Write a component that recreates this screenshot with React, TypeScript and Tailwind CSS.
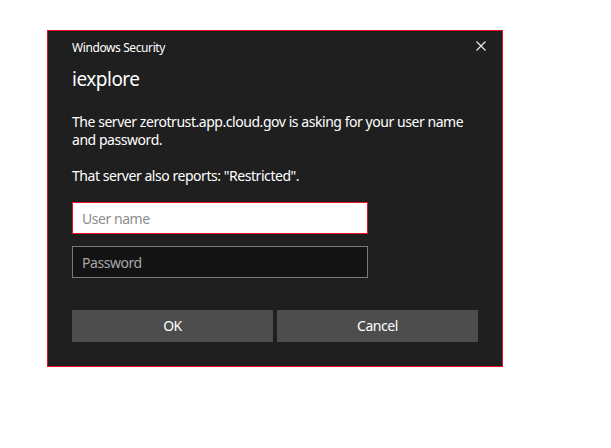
const FONT = "font-['Noto_Sans',sans-serif]";

function CloseIcon() {
  return (
    <svg width="10" height="10" viewBox="0 0 10 10" className="mb-[4px] text-[#f0f0f0]">
      <path d="M0.5 0.5 L9.5 9.5 M9.5 0.5 L0.5 9.5" stroke="currentColor" strokeWidth="1.1" fill="none" />
    </svg>
  );
}

export default function App() {
  return (
    <div className={`min-h-screen bg-white pt-[30px] pl-[47px] ${FONT}`}>
      <div className="w-[456px] border border-[#e81123] bg-[#1f1f1f] text-white">
        <div className="flex items-center justify-between pt-[9px] pl-[24px] pr-[16px]">
          <span className="text-[12px] leading-[16px] tracking-[-0.4px]">Windows Security</span>
          <CloseIcon />
        </div>

        <div className="px-[24px] pb-[24px]">
          <h1 className="mt-[11px] text-[19px] leading-[24px] tracking-[-0.5px]">iexplore</h1>

          <div className="text-[14px] leading-[18px] tracking-[-0.45px]">
            <p className="mt-[22px]">
              The server zerotrust.app.cloud.gov is asking for your user name and password.
            </p>
            <p className="mt-[18px]">That server also reports: "Restricted".</p>
          </div>

          <div className="mt-[17px] flex w-[296px] flex-col gap-[12px]">
            <input
              readOnly
              placeholder="User name"
              className={`h-[32px] w-full border border-[#e81123] bg-white pl-[9px] text-[14px] tracking-[-0.45px] text-black outline-none placeholder:text-[#8c8c8c] ${FONT}`}
            />
            <input
              readOnly
              type="password"
              placeholder="Password"
              className={`h-[32px] w-full border border-[#7a7a7a] bg-[#131313] pl-[9px] text-[14px] tracking-[-0.45px] text-white outline-none placeholder:text-[#a8a8a8] ${FONT}`}
            />
          </div>

          <div className="mt-[32px] flex gap-[4px]">
            <button className="h-[32px] flex-1 bg-[#4d4d4d] pb-[2px] text-[14px] tracking-[-0.45px] text-white">OK</button>
            <button className="h-[32px] flex-1 bg-[#4d4d4d] pb-[2px] text-[14px] tracking-[-0.45px] text-white">Cancel</button>
          </div>
        </div>
      </div>
    </div>
  );
}
